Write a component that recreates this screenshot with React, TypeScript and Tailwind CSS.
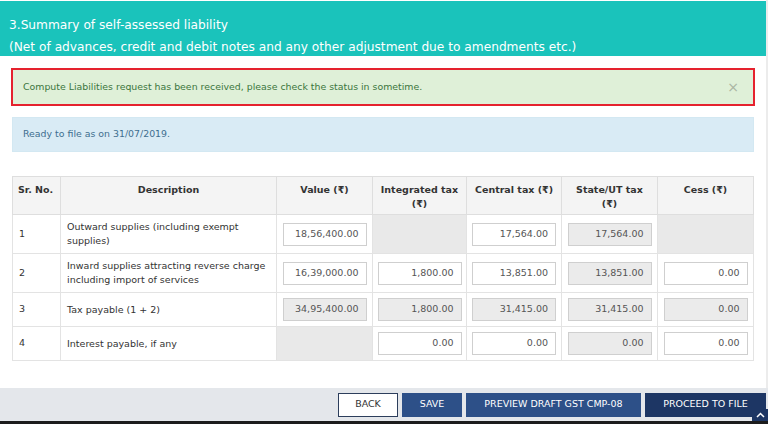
import React from 'react';

type Cell = { v?: string; kind: 'input' | 'ro' | 'blank' };

const rows: { no: string; desc: React.ReactNode; h: string; cells: Cell[] }[] = [
  {
    no: '1',
    desc: (
      <>
        Outward supplies (including exempt
        <br />
        supplies)
      </>
    ),
    h: 'h-[39px]',
    cells: [
      { v: '18,56,400.00', kind: 'input' },
      { kind: 'blank' },
      { v: '17,564.00', kind: 'input' },
      { v: '17,564.00', kind: 'ro' },
      { kind: 'blank' },
    ],
  },
  {
    no: '2',
    desc: (
      <>
        Inward supplies attracting reverse charge
        <br />
        including import of services
      </>
    ),
    h: 'h-[39px]',
    cells: [
      { v: '16,39,000.00', kind: 'input' },
      { v: '1,800.00', kind: 'input' },
      { v: '13,851.00', kind: 'input' },
      { v: '13,851.00', kind: 'ro' },
      { v: '0.00', kind: 'input' },
    ],
  },
  {
    no: '3',
    desc: 'Tax payable (1 + 2)',
    h: 'h-[34px]',
    cells: [
      { v: '34,95,400.00', kind: 'ro' },
      { v: '1,800.00', kind: 'ro' },
      { v: '31,415.00', kind: 'ro' },
      { v: '31,415.00', kind: 'ro' },
      { v: '0.00', kind: 'ro' },
    ],
  },
  {
    no: '4',
    desc: 'Interest payable, if any',
    h: 'h-[34px]',
    cells: [
      { kind: 'blank' },
      { v: '0.00', kind: 'input' },
      { v: '0.00', kind: 'input' },
      { v: '0.00', kind: 'ro' },
      { v: '0.00', kind: 'input' },
    ],
  },
];

function Amount({ cell }: { cell: Cell }) {
  if (cell.kind === 'blank') return null;
  return (
    <div
      className={`mx-auto flex h-[23px] w-[84px] items-center justify-end border border-[#cfcfcf] pr-[7px] text-[9.5px] text-[#555] ${
        cell.kind === 'ro' ? 'bg-[#ebebeb]' : 'bg-white'
      }`}
    >
      {cell.v}
    </div>
  );
}

export default function App() {
  return (
    <div className="relative flex h-[424px] w-[768px] flex-col overflow-hidden bg-white font-['DejaVu_Sans',sans-serif]">
      <div className="flex flex-1">
        <div className="flex w-[766px] flex-col">
          {/* header */}
          <div className="mt-px flex h-[55px] flex-col gap-[6px] bg-[#1ac3bb] pl-[9px] pt-[16px] text-[12.2px] leading-[16px] text-white">
            <div>3.Summary of self-assessed liability</div>
            <div>(Net of advances, credit and debit notes and any other adjustment due to amendments etc.)</div>
          </div>

          <div className="px-[11px] pt-[12px]">
            {/* success alert */}
            <div className="flex h-[38px] items-center justify-between border-2 border-[#e5222e] bg-[#dff0d8] pl-[10px] pr-[14px] text-[9.4px] text-[#3c763d]">
              <span>Compute Liabilities request has been received, please check the status in sometime.</span>
              <span className="text-[14px] leading-none text-[#a9b5a2]">×</span>
            </div>

            {/* info */}
            <div className="mx-px mt-[11px] flex h-[35px] items-center border border-[#d3e8f2] bg-[#d9ebf5] pl-[10px] text-[9.4px] text-[#3e6e8f]">
              Ready to file as on 31/07/2019.
            </div>

            {/* table */}
            <table className="mx-px mt-[24px] w-[741px] table-fixed border-collapse text-[9.5px] text-[#333]">
              <colgroup>
                <col className="w-[48px]" />
                <col className="w-[216px]" />
                <col className="w-[96px]" />
                <col className="w-[94px]" />
                <col className="w-[95px]" />
                <col className="w-[96px]" />
                <col className="w-[96px]" />
              </colgroup>
              <thead>
                <tr className="h-[38px] bg-[#f4f4f4] font-bold">
                  <th className="whitespace-nowrap border border-[#dedede] pl-[5px] pt-[6px] text-left align-top">Sr. No.</th>
                  <th className="border border-[#dedede] px-[6px] pt-[6px] align-top">Description</th>
                  <th className="border border-[#dedede] px-[6px] pt-[6px] align-top">Value (₹)</th>
                  <th className="border border-[#dedede] px-[2px] pt-[6px] align-top leading-[14px]">
                    Integrated tax
                    <br />
                    (₹)
                  </th>
                  <th className="border border-[#dedede] px-[2px] pt-[6px] align-top">Central tax (₹)</th>
                  <th className="border border-[#dedede] px-[2px] pt-[6px] align-top leading-[14px]">
                    State/UT tax
                    <br />
                    (₹)
                  </th>
                  <th className="border border-[#dedede] px-[6px] pt-[6px] align-top">Cess (₹)</th>
                </tr>
              </thead>
              <tbody>
                {rows.map((r) => (
                  <tr key={r.no} className={r.h}>
                    <td className="border border-[#e3e3e3] px-[6px]">{r.no}</td>
                    <td className="border border-[#e3e3e3] px-[6px] leading-[14px]">{r.desc}</td>
                    {r.cells.map((c, i) => (
                      <td
                        key={i}
                        className={`border border-[#e3e3e3] ${c.kind === 'blank' ? 'bg-[#e9e9e9]' : ''}`}
                      >
                        <Amount cell={c} />
                      </td>
                    ))}
                  </tr>
                ))}
              </tbody>
            </table>
          </div>
        </div>
        <div className="w-[2px] bg-[#ececec]" />
      </div>

      {/* footer */}
      <div className="flex h-[33px] items-center justify-end gap-[4px] bg-[#e4e7eb] pr-[2px] text-[9.5px]">
        <button className="h-[24px] w-[60px] border border-[#2c3e5c] bg-white text-[#333]">BACK</button>
        <button className="h-[24px] w-[60px] bg-[#2d5088] text-white">SAVE</button>
        <button className="h-[24px] w-[175px] bg-[#2d5088] text-white">PREVIEW DRAFT GST CMP-08</button>
        <button className="h-[24px] w-[121px] bg-[#1d3664] text-white">PROCEED TO FILE</button>
      </div>
      <div className="h-[3px] bg-[#1c1c1c]" />

      {/* back to top */}
      <div className="absolute bottom-[3px] right-0 flex h-[12px] w-[16px] items-center justify-center bg-[#1d3664]">
        <svg width="9" height="6" viewBox="0 0 9 6">
          <path d="M1 5 L4.5 1.5 L8 5" fill="none" stroke="white" strokeWidth="1.5" />
        </svg>
      </div>
    </div>
  );
}
